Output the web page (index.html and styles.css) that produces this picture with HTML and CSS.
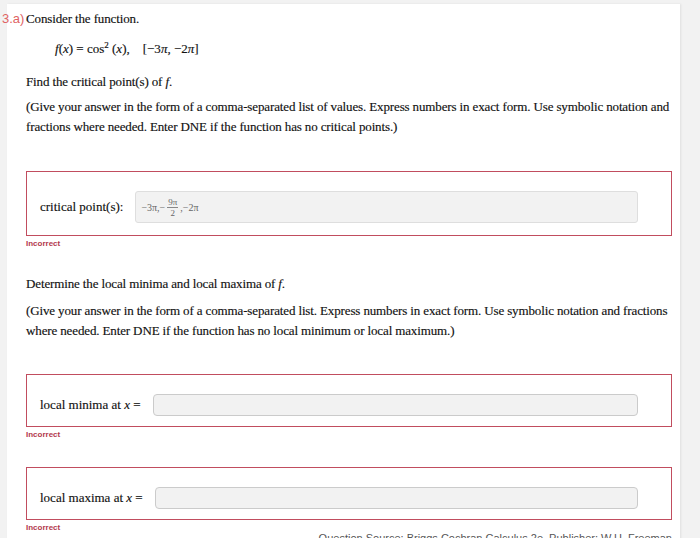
FILE: index.html
```html
<!DOCTYPE html>
<html>
<head>
<meta charset="utf-8">
<link rel="stylesheet" href="styles.css">
</head>
<body>
<div class="card">
  <div class="head"><span class="qnum">3.a)</span><span>Consider the function.</span></div>
  <div class="formula"><i>f</i>(<i>x</i>) = cos<sup>2</sup> (<i>x</i>),&nbsp;&nbsp;&nbsp; [−3<i>π</i>, −2<i>π</i>]</div>
  <p class="line find">Find the critical point(s) of <i>f</i>.</p>
  <p class="para p1">(Give your answer in the form of a comma-separated list of values. Express numbers in exact form. Use symbolic notation and fractions where needed. Enter DNE if the function has no critical points.)</p>

  <div class="answer a1">
    <span class="label">critical point(s):</span>
    <div class="field f1"><span class="val">−3π,−<span class="frac"><span class="num">9π</span><span class="den">2</span></span>,−2π</span></div>
  </div>
  <div class="status">Incorrect</div>

  <p class="line det">Determine the local minima and local maxima of <i>f</i>.</p>
  <p class="para p2">(Give your answer in the form of a comma-separated list. Express numbers in exact form. Use symbolic notation and fractions where needed. Enter DNE if the function has no local minimum or local maximum.)</p>

  <div class="answer a2">
    <span class="label">local minima at <i>x</i> =</span>
    <div class="field f2"></div>
  </div>
  <div class="status">Incorrect</div>

  <div class="answer a3">
    <span class="label">local maxima at <i>x</i> =</span>
    <div class="field f3"></div>
  </div>
  <div class="lastrow">
    <div class="status">Incorrect</div>
    <div class="source">Question Source: Briggs Cochran Calculus 2e &nbsp;Publisher: W.H. Freeman</div>
  </div>
</div>
</body>
</html>
```
FILE: styles.css
```css
html, body {
  margin: 0;
  padding: 0;
  background: #f2f2f2;
  height: 100%;
  overflow: hidden;
}
.card {
  margin: 4px 0 0 7px;
  width: 673px;
  min-height: 600px;
  background: #fff;
  box-shadow: 1px 0 2px rgba(0,0,0,0.08);
  padding: 5px 8px 0 19px;
  box-sizing: border-box;
  font-family: "Liberation Serif", "Times New Roman", serif;
  font-size: 13px;
  letter-spacing: -0.13px;
  color: #111;
  -webkit-text-stroke: 0.15px #111;
}
.head {
  display: flex;
  line-height: 20px;
}
.qnum {
  font-family: "Liberation Sans", Arial, sans-serif;
  color: #e06464;
  -webkit-text-stroke: 0;
  letter-spacing: 0;
  font-size: 13px;
  margin-left: -24px;
  width: 24px;
}
.formula {
  margin: 10px 0 0 29px;
  line-height: 20px;
  letter-spacing: 0;
}
.formula sup {
  font-size: 9px;
  line-height: 0;
}
p { margin: 0; }
.line { line-height: 20px; }
.find { margin-top: 13px; }
.para { line-height: 20px; margin-top: 5px; }
.det { margin-top: 24px; }
.p2 { margin-top: 7px; }
.answer {
  display: flex;
  align-items: center;
  border: 1.5px solid #c14d5e;
  padding: 0 33px 0 13px;
  box-sizing: border-box;
  width: 646px;
}
.a1 { margin-top: 34px; height: 65px; padding-top: 7px; }
.a2 { margin-top: 33px; height: 53px; padding-top: 8px; }
.a3 { margin-top: 26px; height: 53px; padding-top: 9px; }
.label {
  white-space: nowrap;
  letter-spacing: 0;
  margin-right: 12px;
}
.field {
  flex: 1;
  background: #f2f2f2;
  border: 1px solid #dedede;
  border-radius: 3px;
  box-sizing: border-box;
}
.f1 { height: 32px; display: flex; align-items: center; padding-left: 5px; }
.f2, .f3 {
  height: 22px;
  border: 1.5px solid #cbcbcb;
  border-radius: 4px;
}
.val {
  font-size: 10px;
  color: #666;
  -webkit-text-stroke: 0;
  letter-spacing: 0;
  display: inline-flex;
  align-items: center;
}
.frac {
  display: inline-flex;
  flex-direction: column;
  align-items: center;
  font-size: 9px;
  line-height: 10px;
  margin: 0 2px;
}
.frac .num { border-bottom: 1px solid #888; padding: 0 1px; }
.status {
  font-family: "Liberation Sans", Arial, sans-serif;
  font-size: 8px;
  font-weight: bold;
  color: #b3394d;
  -webkit-text-stroke: 0;
  letter-spacing: 0;
  line-height: 12px;
  margin-top: 2px;
}
.lastrow {
  display: flex;
  justify-content: space-between;
  align-items: flex-start;
}
.source {
  font-family: "Liberation Sans", Arial, sans-serif;
  font-size: 11px;
  color: #555;
  -webkit-text-stroke: 0;
  letter-spacing: 0;
  margin-top: 12px;
  white-space: nowrap;
}
```
